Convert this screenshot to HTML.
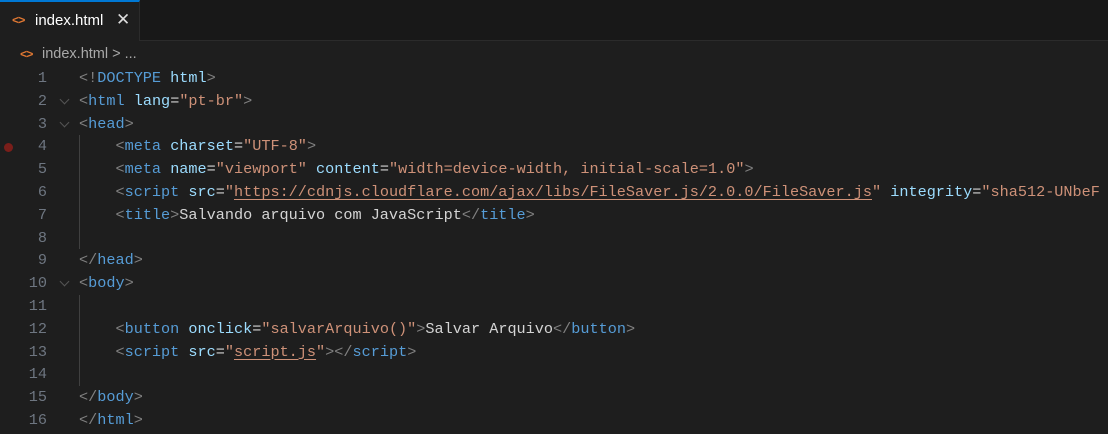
<!DOCTYPE html>
<html><head><meta charset="utf-8"><style>
body{margin:0;width:1108px;height:434px;background:#1e1e1e;overflow:hidden;position:relative;font-family:"Liberation Sans",sans-serif}
.tabbar{position:absolute;left:0;top:0;width:1108px;height:41px;background:#181818;border-bottom:1px solid #2b2b2b;box-sizing:border-box}
.tab{position:absolute;left:0;top:0;width:140px;height:41px;background:#1e1e1e;border-top:2px solid #0078d4;border-right:1px solid #2b2b2b;box-sizing:border-box}
.tab .n{position:absolute;left:35px;top:10px;color:#fff;font-size:15px}
.tab .x{position:absolute;left:116px;top:8px;color:#ddd;font-size:17px}
.ic{position:absolute;color:#e37933;font-size:12px;font-weight:bold;letter-spacing:-1px;font-family:"Liberation Mono",monospace}
.bc{position:absolute;left:42px;top:46px;color:#a9a9a9;font-size:14.5px}
.ln{position:absolute;left:0;width:47px;text-align:right;color:#6e7681;font:15.2px/22.8px "Liberation Mono",monospace}
.cd{position:absolute;left:79px;white-space:pre;color:#d4d4d4;font:15.2px/22.8px "Liberation Mono",monospace}
.b{color:#808080}.t{color:#569cd6}.a{color:#9cdcfe}.s{color:#ce9178}.u{text-decoration:underline;text-underline-offset:3px}
.guide{position:absolute;left:79px;width:1px;background:#404040}
.fold{position:absolute;left:61px;width:6px;height:6px;border-right:1px solid #555;border-bottom:1px solid #555;transform:rotate(45deg)}
</style></head><body>
<div class="tabbar"><div class="tab"><span class="ic" style="left:12px;top:12px">&lt;&gt;</span><span class="n">index.html</span><span class="x">✕</span></div></div>
<span class="ic" style="left:20px;top:48px">&lt;&gt;</span>
<div class="bc">index.html &gt; ...</div>
<div class="guide" style="top:135px;height:114px"></div>
<div class="guide" style="top:295px;height:91px"></div>
<div style="position:absolute;left:4px;top:143px;width:9px;height:9px;border-radius:50%;background:#7a1e1a"></div>
<div class="fold" style="top:96px"></div><div class="fold" style="top:119px"></div><div class="fold" style="top:278px"></div>
<div class="ln" style="top:67px">1</div><div class="ln" style="top:89.8px">2</div><div class="ln" style="top:112.6px">3</div><div class="ln" style="top:135.4px">4</div><div class="ln" style="top:158.2px">5</div><div class="ln" style="top:181px">6</div><div class="ln" style="top:203.8px">7</div><div class="ln" style="top:226.6px">8</div><div class="ln" style="top:249.4px">9</div><div class="ln" style="top:272.2px">10</div><div class="ln" style="top:295px">11</div><div class="ln" style="top:317.8px">12</div><div class="ln" style="top:340.6px">13</div><div class="ln" style="top:363.4px">14</div><div class="ln" style="top:386.2px">15</div><div class="ln" style="top:409px">16</div>
<div class="cd" style="top:67px"><span class="b">&lt;!</span><span class="t">DOCTYPE</span> <span class="a">html</span><span class="b">&gt;</span></div>
<div class="cd" style="top:89.8px"><span class="b">&lt;</span><span class="t">html</span> <span class="a">lang</span>=<span class="s">"pt-br"</span><span class="b">&gt;</span></div>
<div class="cd" style="top:112.6px"><span class="b">&lt;</span><span class="t">head</span><span class="b">&gt;</span></div>
<div class="cd" style="top:135.4px">    <span class="b">&lt;</span><span class="t">meta</span> <span class="a">charset</span>=<span class="s">"UTF-8"</span><span class="b">&gt;</span></div>
<div class="cd" style="top:158.2px">    <span class="b">&lt;</span><span class="t">meta</span> <span class="a">name</span>=<span class="s">"viewport"</span> <span class="a">content</span>=<span class="s">"width=device-width, initial-scale=1.0"</span><span class="b">&gt;</span></div>
<div class="cd" style="top:181px">    <span class="b">&lt;</span><span class="t">script</span> <span class="a">src</span>=<span class="s">"<span class="u">https://cdnjs.cloudflare.com/ajax/libs/FileSaver.js/2.0.0/FileSaver.js</span>"</span> <span class="a">integrity</span>=<span class="s">"sha512-UNbeF</span></div>
<div class="cd" style="top:203.8px">    <span class="b">&lt;</span><span class="t">title</span><span class="b">&gt;</span>Salvando arquivo com JavaScript<span class="b">&lt;/</span><span class="t">title</span><span class="b">&gt;</span></div>
<div class="cd" style="top:249.4px"><span class="b">&lt;/</span><span class="t">head</span><span class="b">&gt;</span></div>
<div class="cd" style="top:272.2px"><span class="b">&lt;</span><span class="t">body</span><span class="b">&gt;</span></div>
<div class="cd" style="top:317.8px">    <span class="b">&lt;</span><span class="t">button</span> <span class="a">onclick</span>=<span class="s">"salvarArquivo()"</span><span class="b">&gt;</span>Salvar Arquivo<span class="b">&lt;/</span><span class="t">button</span><span class="b">&gt;</span></div>
<div class="cd" style="top:340.6px">    <span class="b">&lt;</span><span class="t">script</span> <span class="a">src</span>=<span class="s">"<span class="u">script.js</span>"</span><span class="b">&gt;&lt;/</span><span class="t">script</span><span class="b">&gt;</span></div>
<div class="cd" style="top:386.2px"><span class="b">&lt;/</span><span class="t">body</span><span class="b">&gt;</span></div>
<div class="cd" style="top:409px"><span class="b">&lt;/</span><span class="t">html</span><span class="b">&gt;</span></div>
</body></html>
